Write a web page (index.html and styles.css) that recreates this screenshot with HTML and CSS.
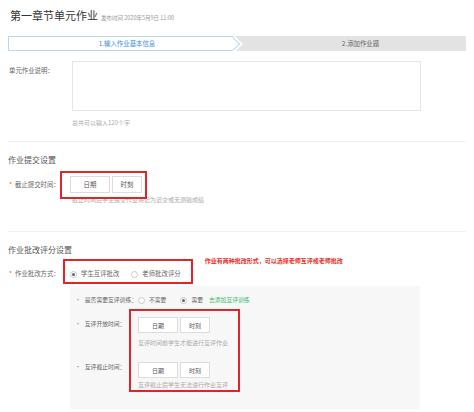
FILE: index.html
```html
<!DOCTYPE html>
<html lang="zh-CN">
<head>
<meta charset="utf-8">
<title>第一章节单元作业</title>
<link rel="stylesheet" href="styles.css">
</head>
<body>
<div class="page">
  <div class="header">
    <h1 class="title">第一章节单元作业</h1>
    <span class="meta">发布时间 2020年5月9日 11:00</span>
  </div>

  <div class="steps">
    <div class="step step-active">1.输入作业基本信息</div>
    <div class="step step-next">2.添加作业题</div>
  </div>

  <div class="field field-desc">
    <label class="label label-desc">单元作业说明：</label>
    <div class="control">
      <div class="textarea"></div>
      <div class="hint hint-desc">总共可以输入120个字</div>
    </div>
  </div>

  <div class="divider divider-1"></div>

  <h2 class="section-title">作业提交设置</h2>
  <div class="field field-submit">
    <label class="label label-submit"><span class="req">*</span>截止提交时间：</label>
    <div class="control">
      <div class="annot annot-submit">
        <button class="btn btn-date">日期</button>
        <button class="btn btn-time">时刻</button>
      </div>
      <div class="hint hint-submit">截止时间后学生提交作业将记为迟交或无测验成绩</div>
    </div>
  </div>

  <div class="divider divider-2"></div>

  <h2 class="section-title">作业批改评分设置</h2>
  <div class="field field-grade">
    <label class="label label-grade"><span class="req">*</span>作业批改方式：</label>
    <div class="annot annot-grade">
      <span class="radio-opt"><span class="radio checked"></span>学生互评批改</span>
      <span class="radio-opt"><span class="radio"></span>老师批改评分</span>
    </div>
    <div class="note">作业有两种批改形式，可以选择老师互评或老师批改</div>
  </div>

  <div class="peer-panel">
    <div class="peer-row">
      <span class="peer-label"><span class="req req-dot">•</span>是否需要互评训练：</span>
      <span class="radio-opt"><span class="radio"></span>不需要</span>
      <span class="radio-opt radio-opt-2"><span class="radio checked"></span>需要</span>
      <a class="link" href="#">去添加互评训练</a>
    </div>
    <div class="peer-times">
      <div class="peer-labels">
        <span class="peer-time-label"><span class="req req-dot">•</span>互评开放时间：</span>
        <span class="peer-time-label peer-time-label-2"><span class="req req-dot">•</span>互评截止时间：</span>
      </div>
      <div class="annot annot-peer">
        <div class="time-group">
          <button class="btn btn-date btn-sm">日期</button>
          <button class="btn btn-time btn-sm">时刻</button>
        </div>
        <div class="hint hint-peer">互评时间前学生才能进行互评作业</div>
        <div class="time-group time-group-2">
          <button class="btn btn-date btn-sm">日期</button>
          <button class="btn btn-time btn-sm">时刻</button>
        </div>
        <div class="hint hint-peer-2">互评截止后学生无法进行作业互评</div>
      </div>
    </div>
  </div>
</div>
</body>
</html>
```

FILE: styles.css
```css
html, body {
  margin: 0;
  background: #fff;
}
body {
  font-family: "Noto Sans CJK SC", "Liberation Sans", sans-serif;
  font-size: 6.4px;
  color: #666;
}
.page {
  padding: 0 8px;
}

/* header */
.header {
  display: flex;
  align-items: baseline;
  gap: 3px;
  padding-top: 9px;
  padding-left: 2px;
}
.title {
  margin: 0;
  font-size: 11px;
  line-height: 12px;
  font-weight: normal;
  color: #333;
}
.meta {
  font-size: 5.5px;
  color: #999;
}

/* steps */
.steps {
  display: flex;
  height: 15px;
  margin-top: 14px;
}
.step {
  display: flex;
  align-items: center;
  justify-content: center;
  box-sizing: border-box;
  font-size: 6.4px;
  white-space: nowrap;
}
.step-active {
  position: relative;
  z-index: 1;
  width: 225px;
  border: 1px solid #bcd6ee;
  border-right: 0;
  background: #fff;
  color: #3d8fdc;
  padding-left: 12px;
}
.step-active::after {
  content: "";
  position: absolute;
  right: -5px;
  top: 50%;
  width: 10px;
  height: 10px;
  margin-top: -5px;
  box-sizing: border-box;
  border-top: 1px solid #bcd6ee;
  border-right: 1px solid #bcd6ee;
  background: #fff;
  transform: rotate(45deg);
  box-shadow: 1px -1px 0 1px #fff;
}
.step-next {
  flex: 1;
  background: #e3e3e3;
  color: #666;
  padding-left: 22px;
}

/* fields */
.field {
  display: flex;
}
.label {
  flex: none;
  width: 64px;
  box-sizing: border-box;
  padding-left: 1px;
  line-height: 10px;
  white-space: nowrap;
  color: #666;
}
.req {
  color: #e0554f;
  margin-right: 3px;
}
.req-dot {
  color: #888;
  margin-right: 4px;
}
.control {
  display: flex;
  flex-direction: column;
}

.field-desc {
  margin-top: 10px;
}
.label-desc {
  margin-top: 5px;
}
.textarea {
  width: 349px;
  height: 50px;
  box-sizing: border-box;
  border: 1px solid #e6e6e6;
  background: #fff;
}
.hint {
  font-size: 6px;
  line-height: 8px;
  color: #aaa;
  white-space: nowrap;
}
.hint-desc {
  margin-top: 8px;
}

.divider {
  height: 1px;
  background: #f0f0f0;
}
.divider-1 {
  margin-top: 14px;
}
.divider-2 {
  margin-top: 27px;
}

.section-title {
  margin: 13px 0 0;
  font-size: 8px;
  line-height: 10px;
  font-weight: normal;
  color: #555;
}

/* annotation boxes */
.annot {
  position: relative;
  z-index: 1;
  border: 2px solid #e0242a;
}

/* submit row */
.field-submit {
  margin-top: 6px;
  align-items: flex-start;
}
.label-submit {
  margin-top: 9px;
}
.annot-submit {
  display: flex;
  gap: 2px;
  width: max-content;
  margin-left: -12px;
  padding: 3px 3px 4px 8px;
}
.btn {
  height: 17px;
  padding: 0;
  border: 1px solid #dcdcdc;
  background: #fff;
  font-family: inherit;
  font-size: 6.4px;
  color: #555;
}
.btn-date {
  width: 40px;
}
.btn-time {
  width: 30px;
}
.btn-sm {
  height: 16px;
  font-size: 6px;
}
.hint-submit {
  margin-top: -3px;
}

/* grading row */
.field-grade {
  margin-top: 4px;
  align-items: flex-end;
}
.label-grade {
  margin-bottom: 5px;
}
.annot-grade {
  display: flex;
  align-items: center;
  gap: 12px;
  margin-left: -9px;
  padding: 8px 10px 3px 5px;
}
.radio-opt {
  display: flex;
  align-items: center;
  gap: 4px;
  line-height: 10px;
  white-space: nowrap;
  color: #666;
}
.radio {
  width: 7px;
  height: 7px;
  box-sizing: border-box;
  border: 1px solid #c8c8c8;
  border-radius: 50%;
  background: #fff;
  display: flex;
  align-items: center;
  justify-content: center;
}
.radio.checked::after {
  content: "";
  width: 3px;
  height: 3px;
  border-radius: 50%;
  background: #666;
}
.note {
  align-self: flex-start;
  margin: -2px 0 0 12px;
  font-size: 6px;
  line-height: 8px;
  font-weight: bold;
  color: #e8302a;
  white-space: nowrap;
}

/* peer review panel */
.peer-panel {
  width: 350px;
  height: 123px;
  box-sizing: border-box;
  margin: 2px 0 0 62px;
  padding: 9px 0 0 5px;
  background: #f7f7f7;
  font-size: 5.8px;
}
.peer-row {
  display: flex;
  align-items: center;
  line-height: 10px;
}
.peer-label {
  width: 63px;
  flex: none;
  white-space: nowrap;
}
.radio-opt-2 {
  margin-left: 14px;
}
.link {
  margin-left: 6px;
  color: #3dbb6c;
  text-decoration: none;
  white-space: nowrap;
}
.peer-times {
  display: flex;
  margin-top: 4px;
}
.peer-labels {
  width: 54px;
  flex: none;
  display: flex;
  flex-direction: column;
  padding-top: 10px;
}
.peer-time-label {
  line-height: 10px;
  white-space: nowrap;
}
.peer-time-label-2 {
  margin-top: 33px;
}
.annot-peer {
  padding: 6px 10px 1px 7px;
}
.time-group {
  display: flex;
  gap: 2px;
}
.time-group-2 {
  margin-top: 15px;
}
.hint-peer {
  margin-top: 6px;
}
.hint-peer-2 {
  margin-top: 3px;
}
```
